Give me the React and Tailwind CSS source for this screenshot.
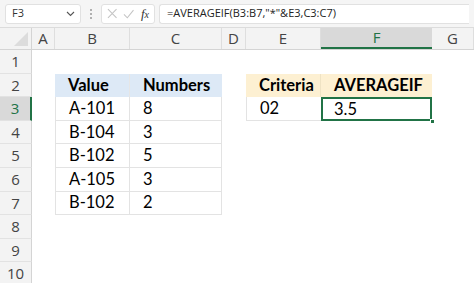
import React from 'react';

const cols = [
  { id: 'A', w: 'w-[23px]' },
  { id: 'B', w: 'w-[75px]' },
  { id: 'C', w: 'w-[92px]' },
  { id: 'D', w: 'w-[24px]' },
  { id: 'E', w: 'w-[75px]' },
  { id: 'F', w: 'w-[111px]', active: true },
  { id: 'G', w: 'flex-1' },
];

const data = [
  ['A-101', '8'],
  ['B-104', '3'],
  ['B-102', '5'],
  ['A-105', '3'],
  ['B-102', '2'],
];

const cellFont = { fontFamily: 'Lato, "Open Sans", sans-serif' };

const FormulaBar = () => (
  <div className="flex h-[28px] items-center gap-[4px] bg-[#f5f5f5] px-[5px] border-b border-[#dcdcdc]">
    <div className="flex h-[20px] w-[76px] items-center justify-between rounded-[3px] border border-[#e1e1e1] bg-white pl-[6px] pr-[5px]">
      <span className="text-[11px] text-[#333]" style={{ fontFamily: '"Open Sans", sans-serif' }}>F3</span>
      <svg width="9" height="6" viewBox="0 0 9 6" fill="none" stroke="#555" strokeWidth="1.1"><path d="M1 1l3.5 3.5L8 1" /></svg>
    </div>
    <div className="flex w-[12px] flex-col items-center gap-[2px]">
      <span className="h-[2px] w-[2px] rounded-full bg-[#999]" />
      <span className="h-[2px] w-[2px] rounded-full bg-[#999]" />
      <span className="h-[2px] w-[2px] rounded-full bg-[#999]" />
    </div>
    <div className="flex h-[20px] w-[54px] items-center gap-[6px] rounded-[3px] border border-[#e1e1e1] bg-white px-[5px]">
      <svg width="11" height="11" viewBox="0 0 11 11" stroke="#c4c4c4" strokeWidth="1.1"><path d="M1 1l9 9M10 1l-9 9" /></svg>
      <svg width="12" height="10" viewBox="0 0 12 10" fill="none" stroke="#c4c4c4" strokeWidth="1.1"><path d="M1 5.5l3.5 3.5L11 1" /></svg>
      <span className="text-[13px] italic text-[#333]" style={{ fontFamily: '"Liberation Serif", serif' }}>f<span className="text-[10px]">x</span></span>
    </div>
    <div className="flex h-[20px] flex-1 items-center rounded-l-[3px] border border-r-0 border-[#e1e1e1] bg-white pl-[7px]">
      <span className="text-[11px] text-[#222]" style={{ fontFamily: '"Open Sans", sans-serif' }}>=AVERAGEIF(B3:B7,"*"&amp;E3,C3:C7)</span>
    </div>
  </div>
);

const HeaderRow = () => (
  <div className="flex h-[22px] bg-[#f3f3f3] border-b border-[#d4d4d4]">
    <div className="relative w-[32px] border-r border-[#d4d4d4]">
      <svg className="absolute right-[3px] bottom-[3px]" width="14" height="14" viewBox="0 0 14 14"><path d="M14 0V14H0Z" fill="#dcdcdc" /></svg>
    </div>
    {cols.map((c) => (
      <div
        key={c.id}
        className={`${c.w} flex items-center justify-center text-[15px] ${c.active ? 'bg-[#d9d9d9] text-[#217346] border-b-2 border-[#217346]' : 'text-[#444] border-r border-[#dedede]'}`}
        style={{ fontFamily: '"Open Sans", sans-serif' }}
      >
        {c.id}
      </div>
    ))}
  </div>
);

const RowHead = ({ n }) => (
  <div
    className={`flex w-[32px] shrink-0 items-center justify-center text-[15px] border-b border-[#e2e2e2] ${n === 3 ? 'bg-[#d9d9d9] text-[#217346] border-r-2 border-r-[#217346]' : 'bg-[#f3f3f3] text-[#444] border-r border-r-[#d4d4d4]'}`}
    style={{ fontFamily: '"Open Sans", sans-serif' }}
  >
    {n}
  </div>
);

const Cell = ({ w, children, className = '' }) => (
  <div className={`${w} flex items-center pl-[13px] text-[16.5px] text-black ${className}`} style={cellFont}>
    {children}
  </div>
);

export default function App() {
  const rows = [];
  for (let n = 1; n <= 10; n++) {
    let content = null;
    if (n === 2) {
      content = (
        <>
          <div className="w-[23px]" />
          <Cell w="w-[75px]" className="bg-[#dde9f6] border-r border-[#e6e6e6] font-bold">Value</Cell>
          <Cell w="w-[92px]" className="bg-[#dde9f6] font-bold">Numbers</Cell>
          <div className="w-[24px]" />
          <Cell w="w-[75px]" className="bg-[#fdf0d2] border-r border-[#efe3c4] font-bold pl-[12px]">Criteria</Cell>
          <Cell w="w-[111px]" className="bg-[#fdf0d2] font-bold">AVERAGEIF</Cell>
        </>
      );
    } else if (n >= 3 && n <= 7) {
      const [v, num] = data[n - 3];
      content = (
        <>
          <div className="w-[23px]" />
          <Cell w="w-[75px]" className="border-l border-b border-r border-[#e3e3e3]">{v}</Cell>
          <Cell w="w-[92px]" className="border-b border-r border-[#e3e3e3]">{num}</Cell>
          {n === 3 && (
            <>
              <div className="w-[24px]" />
              <Cell w="w-[75px]" className="border-l border-b border-[#e3e3e3] pl-[12px]">02</Cell>
              <div className="relative w-[111px] flex items-center">
                <div className="absolute inset-0 border-2 border-[#217346]" />
                <span className="absolute right-[-3px] bottom-[-3px] h-[5px] w-[5px] bg-[#217346] border border-white" />
                <span className="pl-[13px] text-[16.5px] text-black" style={cellFont}>3.5</span>
              </div>
            </>
          )}
        </>
      );
    }
    rows.push(
      <div key={n} className="flex h-[23.6px]">
        <RowHead n={n} />
        {content}
      </div>
    );
  }

  return (
    <div className="h-[283px] w-[474px] overflow-hidden bg-white">
      <FormulaBar />
      <HeaderRow />
      {rows}
    </div>
  );
}
